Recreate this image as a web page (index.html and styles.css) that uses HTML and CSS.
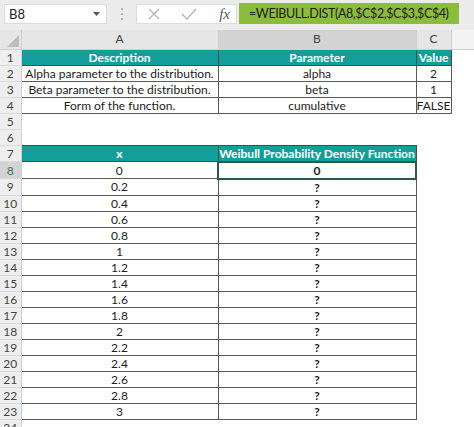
FILE: index.html
```html
<!DOCTYPE html>
<html lang="en">
<head>
    <meta charset="UTF-8">
    <meta name="viewport" content="width=device-width, initial-scale=1.0">
    <title>WEIBULL.DIST</title>
    <link rel="stylesheet" href="styles.css">
</head>
<body>
    <!-- Barra de fórmulas -->
    <div class="formula-bar">
        <div class="name-box">
            <span>B8</span>
            <svg class="arrow" width="7" height="4" viewBox="0 0 7 4"><path d="M0 0 L7 0 L3.5 4 Z" fill="#555"/></svg>
        </div>
        <div class="grip">
            <svg width="4" height="14" viewBox="0 0 4 14"><circle cx="2" cy="2" r="1" fill="#a0a0a0"/><circle cx="2" cy="7" r="1" fill="#a0a0a0"/><circle cx="2" cy="12" r="1" fill="#a0a0a0"/></svg>
        </div>
        <div class="fx-box">
            <svg class="icon" width="14" height="14" viewBox="0 0 14 14"><path d="M2 2 L12 12 M12 2 L2 12" stroke="#b4b4b4" stroke-width="1.3" fill="none"/></svg>
            <svg class="icon" width="16" height="14" viewBox="0 0 16 14"><path d="M1 7 L6 12 L15 2" stroke="#b4b4b4" stroke-width="1.3" fill="none"/></svg>
            <span class="fx">fx</span>
        </div>
        <div class="formula">=WEIBULL.DIST(A8,$C$2,$C$3,$C$4)</div>
    </div>

    <!-- Planilha -->
    <table class="sheet">
        <colgroup>
            <col class="w-rh">
            <col class="w-a">
            <col class="w-b">
            <col class="w-c">
            <col>
        </colgroup>
        <tr class="col-head">
            <td class="corner"><span class="tri"></span></td>
            <td>A</td>
            <td class="sel-col">B</td>
            <td>C</td>
            <td class="blank-head"></td>
        </tr>
        <tr>
            <td class="rh">1</td>
            <td class="hd">Description</td>
            <td class="hd">Parameter</td>
            <td class="hd">Value</td>
            <td></td>
        </tr>
        <tr>
            <td class="rh">2</td>
            <td class="c">Alpha parameter to the distribution.</td>
            <td class="c">alpha</td>
            <td class="c">2</td>
            <td></td>
        </tr>
        <tr>
            <td class="rh">3</td>
            <td class="c">Beta parameter to the distribution.</td>
            <td class="c">beta</td>
            <td class="c">1</td>
            <td></td>
        </tr>
        <tr>
            <td class="rh">4</td>
            <td class="c">Form of the function.</td>
            <td class="c">cumulative</td>
            <td class="c">FALSE</td>
            <td></td>
        </tr>
        <tr><td class="rh">5</td><td></td><td></td><td></td><td></td></tr>
        <tr><td class="rh">6</td><td></td><td></td><td></td><td></td></tr>
        <tr>
            <td class="rh">7</td>
            <td class="hd">x</td>
            <td class="hd">Weibull Probability Density Function</td>
            <td></td>
            <td></td>
        </tr>
        <tr>
            <td class="rh sel-row">8</td>
            <td class="c">0</td>
            <td class="c q active"><div class="active-wrap">0<span class="handle"></span></div></td>
            <td></td>
            <td></td>
        </tr>
        <tr><td class="rh">9</td><td class="c">0.2</td><td class="c q">?</td><td></td><td></td></tr>
        <tr><td class="rh">10</td><td class="c">0.4</td><td class="c q">?</td><td></td><td></td></tr>
        <tr><td class="rh">11</td><td class="c">0.6</td><td class="c q">?</td><td></td><td></td></tr>
        <tr><td class="rh">12</td><td class="c">0.8</td><td class="c q">?</td><td></td><td></td></tr>
        <tr><td class="rh">13</td><td class="c">1</td><td class="c q">?</td><td></td><td></td></tr>
        <tr><td class="rh">14</td><td class="c">1.2</td><td class="c q">?</td><td></td><td></td></tr>
        <tr><td class="rh">15</td><td class="c">1.4</td><td class="c q">?</td><td></td><td></td></tr>
        <tr><td class="rh">16</td><td class="c">1.6</td><td class="c q">?</td><td></td><td></td></tr>
        <tr><td class="rh">17</td><td class="c">1.8</td><td class="c q">?</td><td></td><td></td></tr>
        <tr><td class="rh">18</td><td class="c">2</td><td class="c q">?</td><td></td><td></td></tr>
        <tr><td class="rh">19</td><td class="c">2.2</td><td class="c q">?</td><td></td><td></td></tr>
        <tr><td class="rh">20</td><td class="c">2.4</td><td class="c q">?</td><td></td><td></td></tr>
        <tr><td class="rh">21</td><td class="c">2.6</td><td class="c q">?</td><td></td><td></td></tr>
        <tr><td class="rh">22</td><td class="c">2.8</td><td class="c q">?</td><td></td><td></td></tr>
        <tr><td class="rh">23</td><td class="c">3</td><td class="c q">?</td><td></td><td></td></tr>
        <tr><td class="rh">24</td><td></td><td></td><td></td><td></td></tr>
    </table>
</body>
</html>
```

FILE: styles.css
```css
/* Reset */
* {
    margin: 0;
    padding: 0;
    box-sizing: border-box;
}

body {
    font-family: Lato, "Open Sans", sans-serif;
    background-color: #fff;
    color: #222;
    width: 474px;
    height: 427px;
    overflow: hidden;
}

/* Barra de fórmulas */
.formula-bar {
    height: 30px;
    background-color: #ececec;
    display: flex;
    align-items: flex-start;
    padding: 4px 0 0 4px;
}

.formula-bar > div {
    flex-shrink: 0;
}

.name-box {
    width: 103px;
    height: 20px;
    background-color: #fff;
    border: 1px solid #dcdcdc;
    display: flex;
    align-items: center;
    justify-content: space-between;
    padding: 0 6px 0 4px;
    font-size: 13px;
    color: #222;
}

.grip {
    width: 29px;
    height: 20px;
    display: flex;
    align-items: center;
    justify-content: center;
}

.fx-box {
    width: 101px;
    height: 20px;
    background-color: #fff;
    border: 1px solid #dcdcdc;
    display: flex;
    align-items: center;
    padding: 0 6px 0 10px;
    gap: 20px;
}

.fx-box .fx {
    margin-left: auto;
    font-family: "Liberation Serif", serif;
    font-style: italic;
    font-size: 15px;
    color: #555;
}

.formula {
    margin-left: 2px;
    width: 220px;
    height: 21px;
    margin-top: -1px;
    background-color: #8cbc3c;
    font-size: 12.5px;
    letter-spacing: -0.4px;
    color: #1d1d1d;
    padding-left: 10px;
    display: flex;
    align-items: center;
    white-space: nowrap;
    overflow: hidden;
}

/* Planilha */
.sheet {
    border-collapse: collapse;
    table-layout: fixed;
    width: 474px;
    font-size: 12px;
}

.w-rh { width: 21px; }
.w-a { width: 197px; }
.w-b { width: 198px; }
.w-c { width: 35px; }

.sheet td {
    height: 16px;
    padding: 0;
    text-align: center;
    white-space: nowrap;
    overflow: hidden;
    line-height: 15px;
}

.col-head td {
    height: 19px;
    background-color: #e6e6e6;
    color: #444;
    border-right: 1px solid #cfcfcf;
    border-bottom: 1px solid #cfcfcf;
    line-height: 18px;
}

.col-head .sel-col {
    background-color: #d3d3d3;
}

.col-head .blank-head {
    background-color: #f4f4f4;
    border-right: none;
}

.corner {
    position: relative;
}

.tri {
    position: absolute;
    right: 2px;
    bottom: 2px;
    width: 0;
    height: 0;
    border-left: 12px solid transparent;
    border-bottom: 12px solid #bdbdbd;
}

.rh {
    background-color: #eeeeee;
    color: #444;
    border-right: 1px solid #cfcfcf;
    border-bottom: 1px solid #dadada;
}

.rh.sel-row {
    background-color: #d3d3d3;
    color: #3c7a52;
}

.hd {
    background-color: #139e9b;
    color: #fff;
    font-weight: bold;
    border: 1px solid #4a4a4a;
}

.c {
    border: 1px solid #5a5a5a;
}

.q {
    font-weight: bold;
}

.sheet td.active {
    border: 2px solid #2b5b44;
}

.active-wrap {
    position: relative;
    height: 100%;
}

.handle {
    position: absolute;
    right: -5px;
    bottom: -4px;
    width: 5px;
    height: 5px;
    background-color: #2b5b44;
    border: 1px solid #fff;
}
```
